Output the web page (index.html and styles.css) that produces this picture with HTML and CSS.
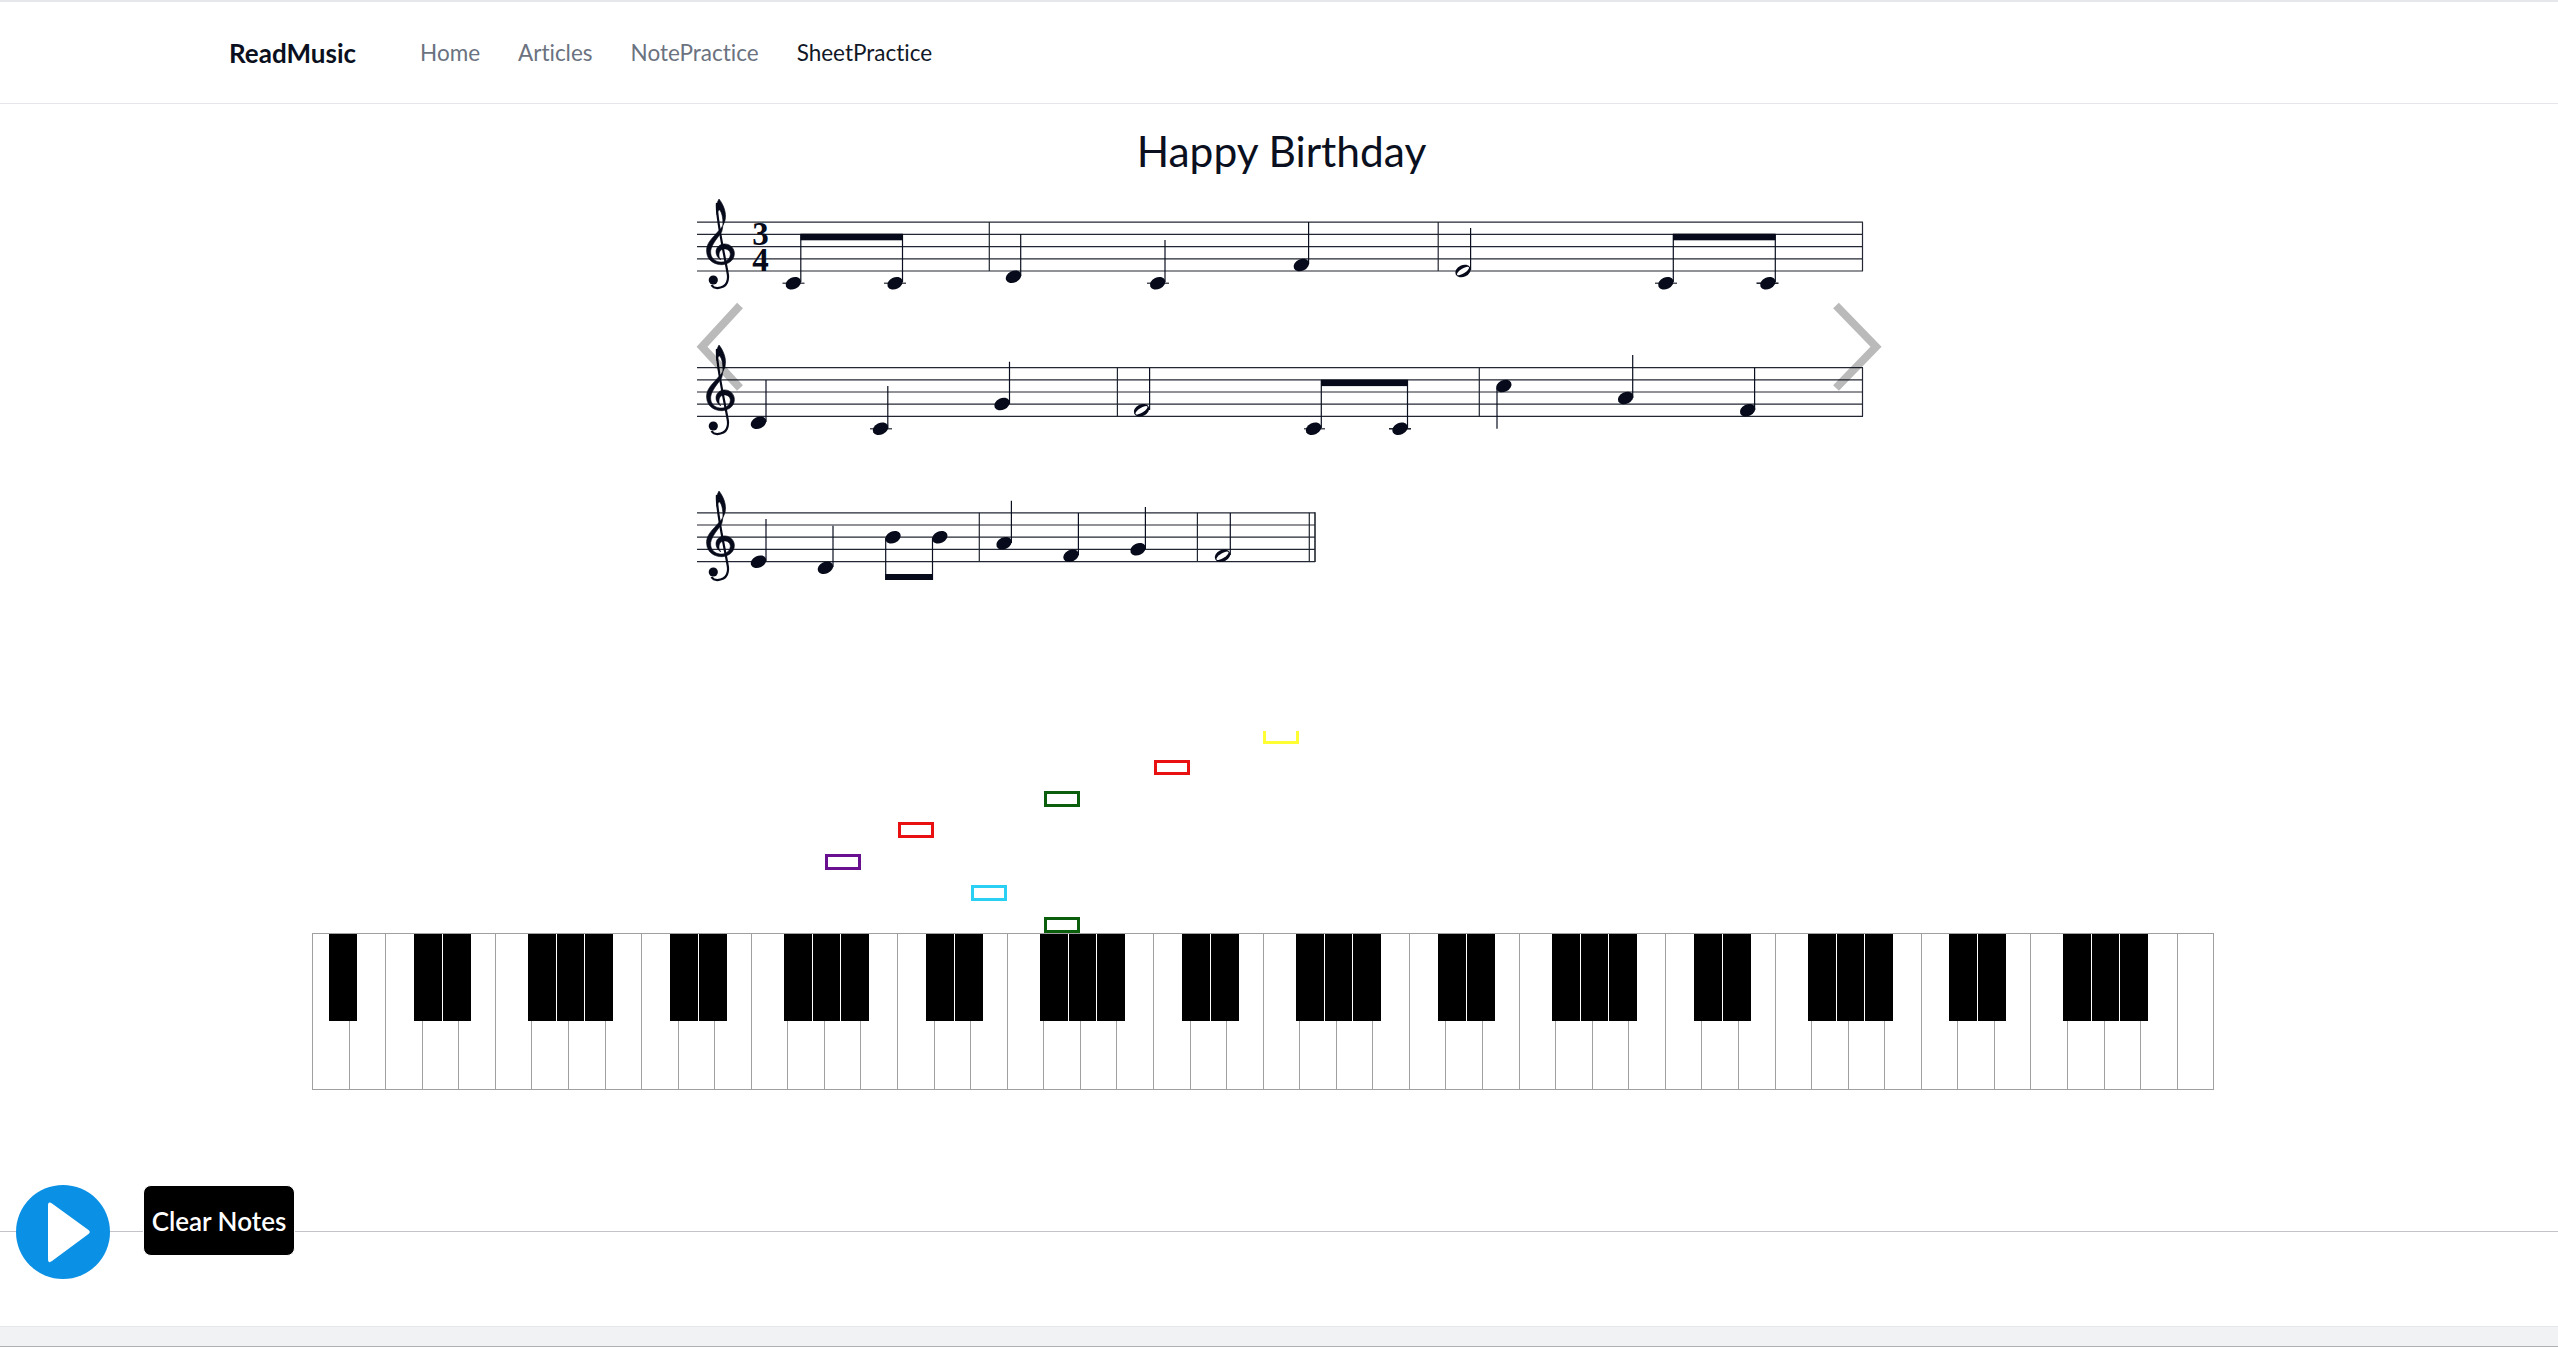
FILE: index.html
```html
<!DOCTYPE html>
<html lang="en">
<head>
  <meta charset="UTF-8" />
  <title>ReadMusic - SheetPractice</title>
  <link rel="stylesheet" href="styles.css">
</head>
<body>
  <header class="navbar">
    <a class="brand" href="#">ReadMusic</a>
    <nav class="nav-links">
      <a href="#">Home</a>
      <a href="#">Articles</a>
      <a href="#">NotePractice</a>
      <a class="active" href="#">SheetPractice</a>
    </nav>
  </header>

  <main class="practice">
    <h1 class="song-title">Happy Birthday</h1>

    <svg class="score" viewBox="0 176 2558 555" width="2558" height="555">
      <defs>
        <g id="clef">
          <path class="stroke-fill" stroke-width="2.2" d="M22 9C21 17 24 34 28.700 58.500S33.500 82 32.700 86C31.500 94 20 96.500 16.500 91"/>
          <circle cx="18.300" cy="86" r="4.600"/>
          <path class="clef-body" d="M24 5C28 10 32 18.500 30 26.500C28.300 33.300 23.300 36.700 19.300 41.700C14 47.300 11 51.700 11.700 58.300C12.300 66.700 20 71 27.300 70.700C35 70 40 65 39.300 58.300C38.700 52.700 33.300 49.300 28.300 50C23.300 50.700 20 55 21.300 60C22.300 63.300 24 65 26 65.700C23.300 64 23.300 58.300 26 56C30 53.300 36 56 35.300 60.700C34.700 66 30 68.300 25 68C19.300 67.300 15 63.300 15.700 56.700C16.700 50 23.300 43.300 26.700 37.700C28.700 31.700 28.300 21.700 25.300 16.700C24 15 22.700 16.700 22 20.700C20.700 15 21.700 8.300 24 5Z"/>
        </g>
        <ellipse id="head" rx="8.100" ry="5.800" transform="rotate(-26)"/>
        <g id="half">
          <ellipse rx="8.100" ry="5.800" transform="rotate(-26)"/>
          <ellipse class="hollow" rx="7" ry="2.400" transform="rotate(-32)"/>
        </g>
        <g id="staff-long">
          <line x1="697" x2="1863" y1="0" y2="0"/>
          <line x1="697" x2="1863" y1="12.200" y2="12.200"/>
          <line x1="697" x2="1863" y1="24.400" y2="24.400"/>
          <line x1="697" x2="1863" y1="36.600" y2="36.600"/>
          <line x1="697" x2="1863" y1="48.800" y2="48.800"/>
          <line x1="1862.500" x2="1862.500" y1="0" y2="48.800"/>
        </g>
      </defs>

      <!-- line 1 -->
      <g class="lines">
        <use href="#staff-long" y="222.200"/>
        <line x1="989.300" x2="989.300" y1="222" y2="271"/>
        <line x1="1438.200" x2="1438.200" y1="222" y2="271"/>
        <line x1="782.500" x2="804.500" y1="283.200" y2="283.200"/>
        <line x1="884" x2="906" y1="283.200" y2="283.200"/>
        <line x1="1147" x2="1169" y1="283.200" y2="283.200"/>
        <line x1="1655" x2="1677" y1="283.200" y2="283.200"/>
        <line x1="1756.500" x2="1778.500" y1="283.200" y2="283.200"/>
      </g>
      <use href="#clef" x="695" y="194"/>
      <text class="time-sig"><tspan x="760.500" y="245">3</tspan><tspan x="760.500" y="271">4</tspan></text>
      <g class="stems">
        <line x1="800.800" x2="800.800" y1="234" y2="282"/>
        <line x1="902.500" x2="902.500" y1="234" y2="282"/>
        <line x1="1020.700" x2="1020.700" y1="234" y2="276"/>
        <line x1="1165" x2="1165" y1="240" y2="282"/>
        <line x1="1308.600" x2="1308.600" y1="222" y2="264"/>
        <line x1="1470.600" x2="1470.600" y1="228" y2="270"/>
        <line x1="1673.300" x2="1673.300" y1="234" y2="282"/>
        <line x1="1775.300" x2="1775.300" y1="234" y2="282"/>
      </g>
      <rect x="800.500" y="233.700" width="102.300" height="6.600"/>
      <rect x="1673" y="233.700" width="102.500" height="6.600"/>
      <use href="#head" x="793.300" y="283.200"/>
      <use href="#head" x="895" y="283.200"/>
      <use href="#head" x="1013.500" y="276.800"/>
      <use href="#head" x="1157.600" y="283.200"/>
      <use href="#head" x="1301.300" y="265"/>
      <use href="#half" x="1463" y="271"/>
      <use href="#head" x="1665.800" y="283.200"/>
      <use href="#head" x="1767.800" y="283.200"/>

      <!-- line 2 -->
      <g class="lines">
        <use href="#staff-long" y="367.600"/>
        <line x1="1117.400" x2="1117.400" y1="367" y2="416"/>
        <line x1="1479.300" x2="1479.300" y1="367" y2="416"/>
        <line x1="870" x2="892" y1="428.800" y2="428.800"/>
        <line x1="1304" x2="1325" y1="428.800" y2="428.800"/>
        <line x1="1389" x2="1411" y1="428.800" y2="428.800"/>
      </g>
      <use href="#clef" x="695" y="340"/>
      <g class="stems">
        <line x1="766" x2="766" y1="380" y2="422"/>
        <line x1="887.800" x2="887.800" y1="386" y2="428"/>
        <line x1="1009.500" x2="1009.500" y1="361.700" y2="404"/>
        <line x1="1149.600" x2="1149.600" y1="367.700" y2="410"/>
        <line x1="1321.300" x2="1321.300" y1="380" y2="428"/>
        <line x1="1407.500" x2="1407.500" y1="380" y2="428"/>
        <line x1="1497" x2="1497" y1="388" y2="428.800"/>
        <line x1="1632.700" x2="1632.700" y1="355" y2="398"/>
        <line x1="1754.600" x2="1754.600" y1="367.700" y2="410"/>
      </g>
      <rect x="1321" y="379.700" width="86.800" height="6.400"/>
      <use href="#head" x="758.500" y="422.700"/>
      <use href="#head" x="880.500" y="428.800"/>
      <use href="#head" x="1002" y="404"/>
      <use href="#half" x="1141.500" y="410.300"/>
      <use href="#head" x="1313.500" y="428.800"/>
      <use href="#head" x="1400" y="428.800"/>
      <use href="#head" x="1503.800" y="386"/>
      <use href="#head" x="1625.600" y="398"/>
      <use href="#head" x="1747.600" y="410.300"/>

      <!-- line 3 -->
      <g class="lines">
        <line x1="697" x2="1315" y1="512.800" y2="512.800"/>
        <line x1="697" x2="1315" y1="525" y2="525"/>
        <line x1="697" x2="1315" y1="537.200" y2="537.200"/>
        <line x1="697" x2="1315" y1="549.400" y2="549.400"/>
        <line x1="697" x2="1315" y1="561.600" y2="561.600"/>
        <line x1="979.300" x2="979.300" y1="512.800" y2="561.600"/>
        <line x1="1197.400" x2="1197.400" y1="512.800" y2="561.600"/>
        <line x1="1309.300" x2="1309.300" y1="512.800" y2="561.600"/>
        <line x1="1315" x2="1315" y1="512.300" y2="562.100"/>
      </g>
      <use href="#clef" x="695" y="486"/>
      <g class="stems">
        <line x1="766" x2="766" y1="519" y2="561"/>
        <line x1="833" x2="833" y1="525.700" y2="567"/>
        <line x1="885.700" x2="885.700" y1="538" y2="580"/>
        <line x1="932.500" x2="932.500" y1="538" y2="580"/>
        <line x1="1011.400" x2="1011.400" y1="500.700" y2="543"/>
        <line x1="1078.400" x2="1078.400" y1="513" y2="555"/>
        <line x1="1145.400" x2="1145.400" y1="507" y2="549"/>
        <line x1="1230.300" x2="1230.300" y1="513" y2="555"/>
      </g>
      <rect x="885.300" y="574" width="47.600" height="6"/>
      <use href="#head" x="758.500" y="561.700"/>
      <use href="#head" x="825.400" y="567.700"/>
      <use href="#head" x="893" y="537.300"/>
      <use href="#head" x="939.800" y="537.300"/>
      <use href="#head" x="1004" y="543.300"/>
      <use href="#head" x="1071" y="555.700"/>
      <use href="#head" x="1138" y="549.300"/>
      <use href="#half" x="1222.500" y="555.700"/>

      <!-- carousel arrows -->
      <polyline class="arrow" points="740,305.500 702,346.700 740,388"/>
      <polyline class="arrow" points="1836,305.500 1876,346.700 1836,388"/>
    </svg>

    <div class="note-lane">
      <span class="falling-note yellow" style="left:951px;top:-13px;height:26px"></span>
      <span class="falling-note red" style="left:842px;top:29px;height:15px"></span>
      <span class="falling-note green" style="left:732px;top:60px"></span>
      <span class="falling-note red" style="left:586px;top:91px"></span>
      <span class="falling-note purple" style="left:513px;top:123px"></span>
      <span class="falling-note cyan" style="left:659px;top:154px"></span>
      <span class="falling-note green" style="left:732px;top:186px"></span>
    </div>

    <div class="piano" id="piano"></div>

    <div class="controls">
      <button class="play-btn" aria-label="Play">
        <svg viewBox="0 0 94 94" width="94" height="94">
          <path d="M32 20.500Q32 15.500 36 18.500L72.500 45Q75 47 72.500 49L36 76Q32 79 32 74Z" fill="#fff"/>
        </svg>
      </button>
      <button class="clear-btn">Clear Notes</button>
    </div>
  </main>

  <footer class="page-footer"></footer>

  <script src="piano.js"></script>
</body>
</html>
```

FILE: styles.css
```css
* { box-sizing: border-box; }

body {
  margin: 0;
  height: 100vh;
  overflow: hidden;
  display: flex;
  flex-direction: column;
  background: #fff;
  color: #0b1020;
  font-family: Lato, 'Noto Sans', sans-serif;
  font-variant-ligatures: none;
}

.navbar {
  height: 104px;
  padding-left: 229px;
  display: flex;
  align-items: center;
  gap: 64px;
  border-top: 2px solid #e5e7eb;
  border-bottom: 1px solid #e5e7eb;
}

.navbar a {
  text-decoration: none;
}

.brand {
  font-size: 26px;
  font-weight: 700;
  color: #0b1020;
}

.nav-links {
  display: flex;
  gap: 38px;
  font-size: 22.500px;
}

.nav-links a {
  color: #6b7280;
}

.nav-links a.active {
  color: #111827;
}

.practice {
  flex: 1;
}

.song-title {
  margin: 0;
  padding: 21px 0 0 5px;
  text-align: center;
  font-size: 42.500px;
  line-height: 51px;
  font-weight: 400;
}

.score {
  display: block;
  fill: #060a1a;
}

.lines line,
.lines use {
  stroke: #222733;
  stroke-width: 1.200;
}

.lines line:last-child {
  stroke-width: 1.600;
}

.stems line {
  stroke: #0b1020;
  stroke-width: 1.200;
}

.stroke-fill {
  fill: none;
  stroke: #060a1a;
}

.clef-body {
  stroke: #060a1a;
  stroke-width: 0.600;
}

.hollow {
  fill: #fff;
}

.time-sig {
  font-family: 'Liberation Serif', serif;
  font-size: 33px;
  font-weight: 700;
  text-anchor: middle;
}

.arrow {
  fill: none;
  stroke: #000;
  stroke-opacity: 0.27;
  stroke-width: 8;
}

.note-lane {
  position: relative;
  height: 202px;
  margin-left: 312px;
  width: 1902px;
  overflow: hidden;
}

.falling-note {
  position: absolute;
  width: 36px;
  height: 16px;
  border: 3px solid;
}

.yellow { border-color: #ffff33; }
.red { border-color: #e81010; }
.green { border-color: #0b5e0b; }
.purple { border-color: #68108f; }
.cyan { border-color: #2ad0f4; }

.piano {
  position: relative;
  display: flex;
  width: 1902px;
  height: 157px;
  margin-left: 312px;
  border-top: 1px solid #a0a0a0;
  border-bottom: 1px solid #a0a0a0;
  border-left: 1px solid #a0a0a0;
}

.white-key {
  flex: 1;
  border-right: 1px solid #a0a0a0;
}

.black-key {
  position: absolute;
  top: 0;
  width: 29px;
  height: 87px;
  background: #000;
  border-left: 1px solid #fff;
}

.controls {
  position: relative;
  display: flex;
  align-items: flex-start;
  gap: 33px;
  margin-top: 95px;
  padding-left: 16px;
}

.controls::before {
  content: "";
  position: absolute;
  left: 0;
  right: 0;
  top: 46px;
  height: 1px;
  background: #c4c4c8;
}

.play-btn {
  position: relative;
  width: 94px;
  height: 94px;
  padding: 0;
  border: none;
  border-radius: 50%;
  background: #0a90e4;
}

.play-btn svg {
  display: block;
}

.clear-btn {
  position: relative;
  height: 71px;
  width: 152px;
  padding: 0;
  border: 1px solid #fff;
  border-radius: 8px;
  background: #000;
  color: #fff;
  font-family: inherit;
  font-size: 26px;
  font-weight: 600;
}

.page-footer {
  height: 21px;
  background: #f1f2f4;
  border-top: 1px solid #e5e7eb;
  border-bottom: 1px solid #b0b0b0;
}
```

FILE: piano.js
```js
const piano = document.getElementById("piano");

const WHITE_KEYS = 52;
const OCTAVE = 255.9;
const BLACK_OFFSETS = [102, 131, 216, 245, 273];

for (let i = 0; i < WHITE_KEYS; i++) {
  const key = document.createElement("div");
  key.className = "white-key";
  piano.appendChild(key);
}

// left is measured from the piano's outer edge, the key's own white edge sits 1px before it
function addBlackKey(left) {
  const key = document.createElement("div");
  key.className = "black-key";
  key.style.left = Math.round(left) - 2 + "px";
  piano.appendChild(key);
}

addBlackKey(17);
for (let octave = 0; octave < 7; octave++) {
  BLACK_OFFSETS.forEach(offset => addBlackKey(offset + octave * OCTAVE));
}
```
